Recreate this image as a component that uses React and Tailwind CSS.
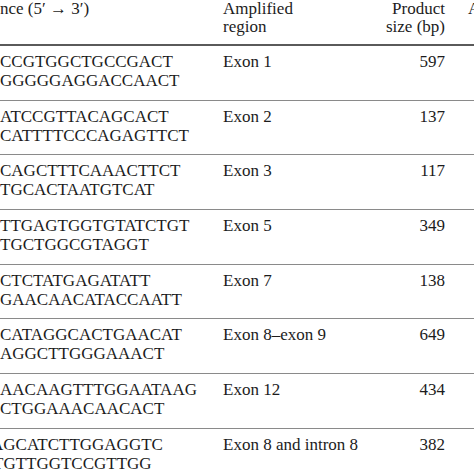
import React from "react"

const rows = [
  { seq: ["CCGTGGCTGCCGACT", "GGGGGAGGACCAACT"], region: "Exon 1", size: "597" },
  { seq: ["ATCCGTTACAGCACT", "CATTTTCCCAGAGTTCT"], region: "Exon 2", size: "137" },
  { seq: ["CAGCTTTCAAACTTCT", "TGCACTAATGTCAT"], region: "Exon 3", size: "117" },
  { seq: ["TTGAGTGGTGTATCTGT", "TGCTGGCGTAGGT"], region: "Exon 5", size: "349" },
  { seq: ["CTCTATGAGATATT", "GAACAACATACCAATT"], region: "Exon 7", size: "138" },
  { seq: ["CATAGGCACTGAACAT", "AGGCTTGGGAAACT"], region: "Exon 8–exon 9", size: "649" },
  { seq: ["AACAAGTTTGGAATAAG", "CTGGAAACAACACT"], region: "Exon 12", size: "434" },
  { seq: ["AGCATCTTGGAGGTC", "TGTTGGTCCGTTGG"], region: "Exon 8 and intron 8", size: "382", clip: true },
]

const App = () => {
  return (
    <div className="w-[474px] h-[474px] overflow-hidden bg-white text-[#1c1c1c] text-[17px] leading-[19px] font-['Liberation_Serif','Times_New_Roman',serif]">
      {/* header */}
      <div className="flex h-[44px] leading-[18px] whitespace-nowrap">
        <div className="w-[223px] shrink-0">nce (5′ → 3′)</div>
        <div className="w-[150px] shrink-0">
          Amplified
          <br />
          region
        </div>
        <div className="w-[72px] shrink-0 text-right">
          Product
          <br />
          size (bp)
        </div>
        <div className="pl-[23px]">Annealing</div>
      </div>
      <div className="h-[2px] bg-[#5a5a5a]" />

      {rows.map((r, i) => (
        <div
          key={i}
          className={`flex pt-[6px] pb-[9.67px] whitespace-nowrap ${i < rows.length - 1 ? "border-b border-[#8a8a8a]" : ""}`}
        >
          <div className="w-[223px] shrink-0 overflow-hidden">
            <div className={r.clip ? "-ml-[9px]" : ""}>{r.seq[0]}</div>
            <div className={r.clip ? "-ml-[7px]" : ""}>{r.seq[1]}</div>
          </div>
          <div className="w-[150px] shrink-0">{r.region}</div>
          <div className="w-[72px] shrink-0 text-right">{r.size}</div>
        </div>
      ))}
    </div>
  )
}

export default App
